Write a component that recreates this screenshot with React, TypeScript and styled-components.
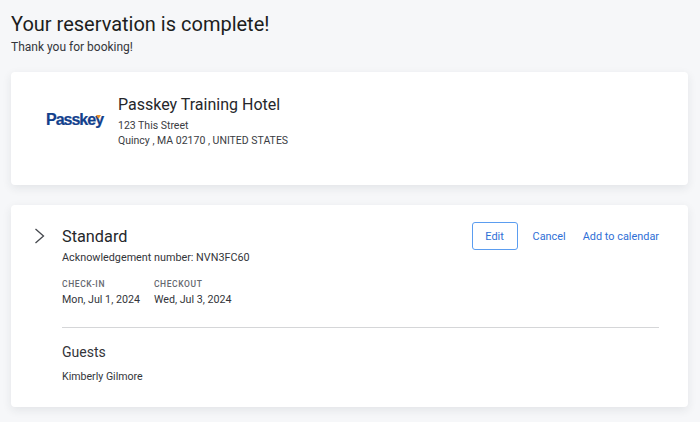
import React from "react";
import styled, { createGlobalStyle } from "styled-components";

const Global = createGlobalStyle`
  html, body { margin: 0; padding: 0; background: #f6f7f9; }
  body { font-family: Roboto, "Noto Sans", sans-serif; color: #25272b; overflow: hidden; }
`;
const Page = styled.div`
  width: 700px; height: 422px; box-sizing: border-box; padding: 12px 12px 0 11px; overflow: hidden;
`;
const Title = styled.h1`
  margin: 0; font-size: 20px; line-height: 24px; font-weight: 400; color: #1c1d20;
`;
const Sub = styled.p`
  margin: 4px 0 0; font-size: 12px; line-height: 15px; color: #33353a;
`;
const Card = styled.section`
  background: #fff; border-radius: 4px; box-shadow: 0 3px 10px rgba(30, 40, 60, 0.09);
`;
const HotelCard = styled(Card)`
  margin-top: 17px; height: 113px; box-sizing: border-box; padding: 23px 0 0 35px; display: flex;
`;
const LogoBox = styled.div`
  width: 72px; padding-top: 16px; position: relative;
`;
const LogoText = styled.span`
  font-family: "Liberation Sans", Arial, sans-serif; font-weight: 700; font-size: 16px; line-height: 18px;
  color: #12408c; letter-spacing: -1px; display: block; -webkit-text-stroke: 0.2px #12408c;
`;
const LogoMark = styled.svg`
  position: absolute; left: 50px; top: 20px; width: 5px; height: 4px;
`;
const HotelInfo = styled.div`
  display: flex; flex-direction: column;
`;
const HotelName = styled.h2`
  margin: 0; font-size: 16px; line-height: 20px; font-weight: 400; color: #25272b;
`;
const Addr = styled.div`
  font-size: 10.5px; line-height: 15px; color: #3a3c42; margin-top: 3px;
`;
const StayCard = styled(Card)`
  margin-top: 20px; height: 202px; box-sizing: border-box; padding: 20px 29px 0 22px; display: flex;
`;
const Chevron = styled.svg`
  width: 14px; height: 16px; margin-top: 3px; margin-right: 15px; flex: none;
`;
const StayBody = styled.div`
  flex: 1; display: flex; flex-direction: column;
`;
const StayHead = styled.div`
  display: flex; justify-content: space-between; align-items: flex-start;
`;
const RoomName = styled.h2`
  margin: 0; font-size: 16.3px; line-height: 24px; font-weight: 400;
`;
const Ack = styled.div`
  font-size: 10.8px; line-height: 14px; color: #33353a; margin-top: 2px;
`;
const Actions = styled.div`
  display: flex; align-items: center; margin-top: -3px;
`;
const EditButton = styled.button`
  width: 46px; height: 28px; box-sizing: border-box; border: 1.5px solid #5b9df0; border-radius: 3px; background: #fff;
  color: #2f6fd6; font: 400 11px Roboto, sans-serif; padding: 0; margin-right: 15px;
`;
const TextLink = styled.a`
  color: #2f6fd6; font-size: 10.9px; margin-left: ${(p: { $gap?: number }) => p.$gap ?? 0}px;
`;
const Dates = styled.div`
  display: flex; gap: 14px; margin-top: 14px;
`;
const DateLabel = styled.div`
  font-size: 8.5px; line-height: 11px; font-weight: 500; color: #65686f; letter-spacing: 0.6px;
`;
const DateValue = styled.div`
  font-size: 10.7px; line-height: 14px; color: #33353a; margin-top: 3px;
`;
const Rule = styled.hr`
  margin: 20px 0 0; border: 0; border-top: 1px solid #d5d6d8;
`;
const Guests = styled.h3`
  margin: 15px 0 0; font-size: 14px; line-height: 18px; font-weight: 400; color: #33353a;
`;
const GuestName = styled.div`
  font-size: 10.6px; line-height: 14px; color: #33353a; margin-top: 9px;
`;

export default function App() {
  return (
    <Page>
      <Global />
      <Title>Your reservation is complete!</Title>
      <Sub>Thank you for booking!</Sub>
      <HotelCard>
        <LogoBox>
          <LogoText>Passkey</LogoText>
          <LogoMark viewBox="0 0 5 4"><path d="M0 0h5L2.5 4z" fill="#e8912d" /></LogoMark>
        </LogoBox>
        <HotelInfo>
          <HotelName>Passkey Training Hotel</HotelName>
          <Addr>123 This Street<br />Quincy , MA 02170 , UNITED STATES</Addr>
        </HotelInfo>
      </HotelCard>
      <StayCard>
        <Chevron viewBox="0 0 14 16"><path d="M2.5 1l8 7-8 7" fill="none" stroke="#44474d" strokeWidth="1.3" /></Chevron>
        <StayBody>
          <StayHead>
            <div>
              <RoomName>Standard</RoomName>
              <Ack>Acknowledgement number: NVN3FC60</Ack>
            </div>
            <Actions>
              <EditButton>Edit</EditButton>
              <TextLink>Cancel</TextLink>
              <TextLink $gap={17}>Add to calendar</TextLink>
            </Actions>
          </StayHead>
          <Dates>
            <div><DateLabel>CHECK-IN</DateLabel><DateValue>Mon, Jul 1, 2024</DateValue></div>
            <div><DateLabel>CHECKOUT</DateLabel><DateValue>Wed, Jul 3, 2024</DateValue></div>
          </Dates>
          <Rule />
          <Guests>Guests</Guests>
          <GuestName>Kimberly Gilmore</GuestName>
        </StayBody>
      </StayCard>
    </Page>
  );
}
